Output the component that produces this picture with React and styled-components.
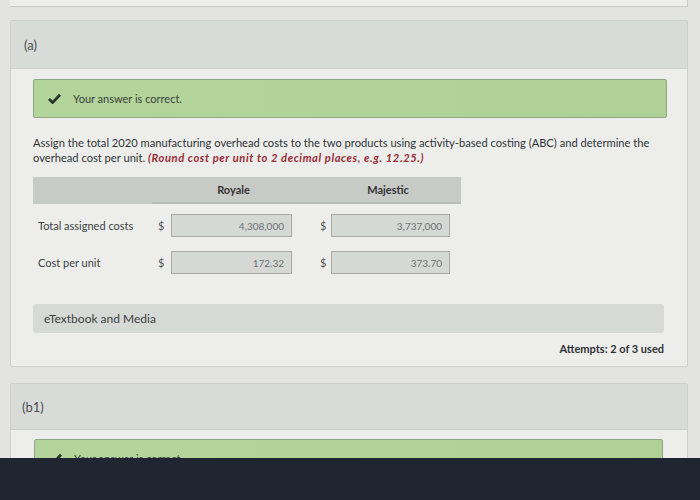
import React from 'react';
import styled, { createGlobalStyle } from 'styled-components';

const GlobalStyle = createGlobalStyle`
  html, body {
    margin: 0;
    padding: 0;
  }
  body {
    width: 700px;
    height: 500px;
    overflow: hidden;
    background: #e3e4e2;
    font-family: Lato, "Open Sans", sans-serif;
    color: #333638;
  }
`;

const Page = styled.div`
  display: flex;
  flex-direction: column;
  padding: 0 12px 0 10px;
`;

const TopStub = styled.div`
  height: 6px;
  background: #eeefed;
  border-right: 1px solid #c9cac8;
  border-bottom: 1px solid #c9cac8;
`;

const Card = styled.section`
  margin-top: ${p => p.$top}px;
  background: #edeeec;
  border: 1px solid #cfd0ce;
  border-radius: 2px;
`;

const CardHeader = styled.div`
  height: ${p => p.$h}px;
  display: flex;
  align-items: center;
  padding-left: ${p => p.$pad}px;
  background: #d9dbd9;
  border-bottom: 1px solid #cdcfcd;
  font-size: 13px;
  color: #4a4d50;
`;

const CardBody = styled.div`
  padding: 10px 20px 10px 22px;
`;

const Notice = styled.div`
  height: 37px;
  display: flex;
  align-items: center;
  gap: 12px;
  padding-left: 14px;
  background: linear-gradient(90deg, #b3d49b, #afd096);
  border: 1px solid #8fa882;
  border-radius: 2px;
  font-size: 11px;
  color: #3a3f3a;
`;

const Prompt = styled.p`
  margin: 17px 0 0;
  font-size: 11.15px;
  line-height: 15px;
  color: #2f3235;
`;

const Hint = styled.span`
  font-weight: 700;
  font-style: italic;
  letter-spacing: 0.6px;
  color: #9b2b36;
`;

const Table = styled.div`
  margin-top: 12px;
  width: 428px;
`;

const HeadRow = styled.div`
  display: flex;
  height: 27px;
  background: #c8cac8;
  font-size: 11px;
  font-weight: 700;
  color: #333;
`;

const HeadCell = styled.div`
  width: ${p => p.$w}px;
  display: flex;
  align-items: center;
  justify-content: center;
  border-bottom: ${p => (p.$line ? '2px solid #b9bbb9' : 'none')};
`;

const Row = styled.div`
  display: flex;
  align-items: center;
  margin-top: ${p => p.$top}px;
  height: 23px;
`;

const Label = styled.div`
  width: 119px;
  padding-left: 5px;
  box-sizing: border-box;
  font-size: 11px;
  color: #3b3e41;
`;

const Cell = styled.div`
  width: ${p => p.$w}px;
  display: flex;
  align-items: center;
  padding-left: ${p => p.$pad}px;
  box-sizing: border-box;
`;

const Dollar = styled.span`
  width: ${p => p.$w}px;
  font-size: 11px;
  color: #555;
`;

const Field = styled.div`
  width: ${p => p.$w}px;
  height: 23px;
  box-sizing: border-box;
  display: flex;
  align-items: center;
  justify-content: flex-end;
  padding-right: 7px;
  background: #d6d8d6;
  border: 1px solid #a8aaa8;
  font-size: 10px;
  color: #6d7072;
`;

const MediaBar = styled.div`
  margin: 30px 3px 0 0;
  height: 29px;
  display: flex;
  align-items: center;
  padding-left: 11px;
  background: #d7d9d7;
  border-radius: 3px;
  font-size: 12px;
  color: #3b3e41;
`;

const Attempts = styled.div`
  margin: 8px 3px 0 0;
  text-align: right;
  font-size: 11px;
  line-height: 15px;
  font-weight: 700;
  color: #2f3235;
`;

const PartialBody = styled.div`
  padding: 9px 24px 0 23px;
`;

const Taskbar = styled.div`
  position: fixed;
  left: 0;
  right: 0;
  bottom: 0;
  height: 42px;
  background: #1f2631;
`;

const Check = () => (
  <svg width="13" height="11" viewBox="0 0 13 11">
    <path d="M1 6 L4.6 9.6 L12 1.8" fill="none" stroke="#28342a" strokeWidth="2.8" strokeLinejoin="round" />
  </svg>
);

const rows = [
  { label: 'Total assigned costs', royale: '4,308,000', majestic: '3,737,000', top: 10 },
  { label: 'Cost per unit', royale: '172.32', majestic: '373.70', top: 14 }
];

const App = () => (
  <>
    <GlobalStyle />
    <Page>
      <TopStub />
      <Card $top={13}>
        <CardHeader $h={47} $pad={13}>(a)</CardHeader>
        <CardBody>
          <Notice>
            <Check />
            Your answer is correct.
          </Notice>
          <Prompt>
            Assign the total 2020 manufacturing overhead costs to the two products using activity-based costing (ABC) and determine the
            overhead cost per unit. <Hint>(Round cost per unit to 2 decimal places, e.g. 12.25.)</Hint>
          </Prompt>
          <Table>
            <HeadRow>
              <HeadCell $w={119} />
              <HeadCell $w={163} $line>Royale</HeadCell>
              <HeadCell $w={146} $line>Majestic</HeadCell>
            </HeadRow>
            {rows.map(r => (
              <Row key={r.label} $top={r.top}>
                <Label>{r.label}</Label>
                <Cell $w={163} $pad={6}>
                  <Dollar $w={13}>$</Dollar>
                  <Field $w={121}>{r.royale}</Field>
                </Cell>
                <Cell $w={146} $pad={5}>
                  <Dollar $w={11}>$</Dollar>
                  <Field $w={119}>{r.majestic}</Field>
                </Cell>
              </Row>
            ))}
          </Table>
          <MediaBar>eTextbook and Media</MediaBar>
          <Attempts>Attempts: 2 of 3 used</Attempts>
        </CardBody>
      </Card>
      <Card $top={16}>
        <CardHeader $h={45} $pad={11}>(b1)</CardHeader>
        <PartialBody>
          <Notice>
            <Check />
            Your answer is correct.
          </Notice>
        </PartialBody>
      </Card>
    </Page>
    <Taskbar />
  </>
);

export default App;
